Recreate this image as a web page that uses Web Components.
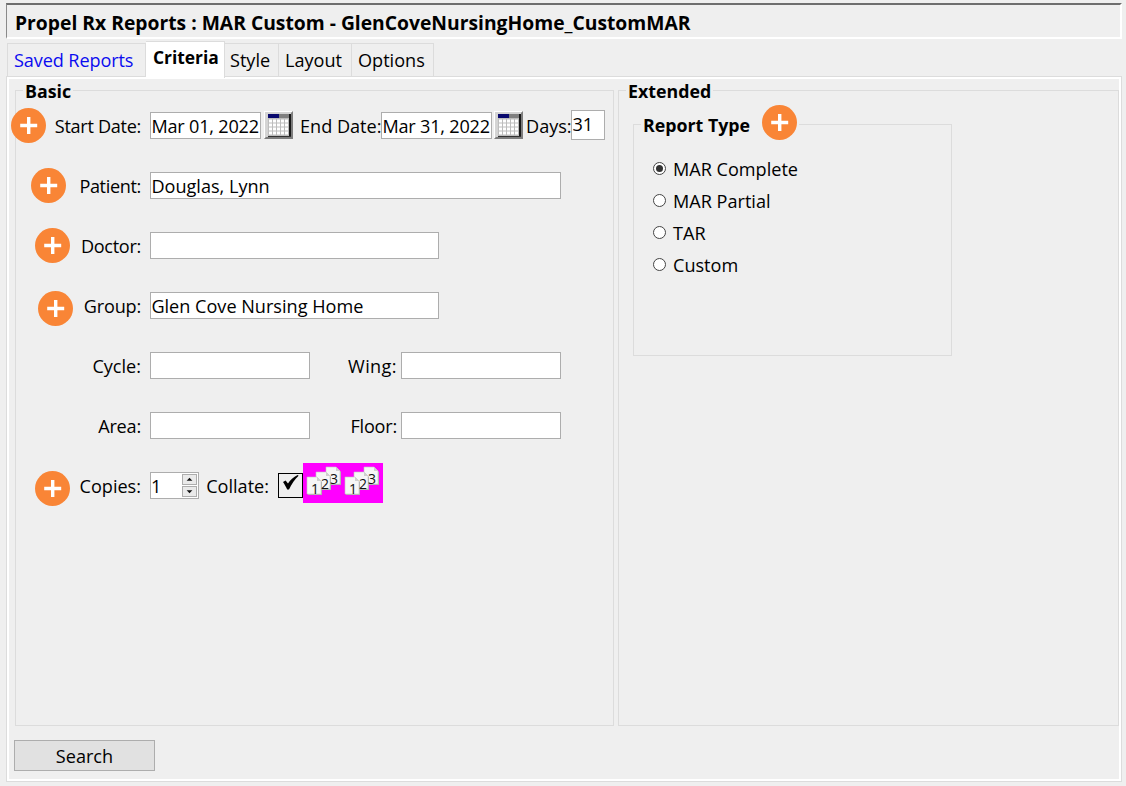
<!DOCTYPE html>
<html>
<head>
<meta charset="utf-8">
<title>Propel Rx Reports</title>
<style>
    html, body { margin: 0; height: 100%; }
    body {
        width: 1126px;
        height: 786px;
        overflow: hidden;
        background: #efefef;
        color: #000;
        font: 18.1px "Open Sans", "Noto Sans", sans-serif;
    }
</style>
</head>
<body>
<rx-report-window>
    <rx-title-bar slot="title">Propel Rx Reports : MAR Custom - GlenCoveNursingHome_CustomMAR</rx-title-bar>
    <rx-tab slot="tabs" link style="--w:139px;--pad:6px">Saved Reports</rx-tab>
    <rx-tab slot="tabs" selected style="--w:79px;--pad:7px">Criteria</rx-tab>
    <rx-tab slot="tabs" style="--w:54px;--pad:5px">Style</rx-tab>
    <rx-tab slot="tabs" style="--w:73px;--pad:6px">Layout</rx-tab>
    <rx-tab slot="tabs" style="--w:82px;--pad:6px">Options</rx-tab>

    <rx-group slot="basic" legend="Basic">
        <rx-form-row label="Start Date:" add style="--add-gap:9px;--ls:-.3px">
            <rx-text-box style="--w:111px;letter-spacing:-.2px">Mar 01, 2022</rx-text-box>
            <rx-calendar-button style="margin-left:3px"></rx-calendar-button>
            <rx-label style="margin-left:7px;width:81px">End Date:</rx-label>
            <rx-text-box style="--w:111px;letter-spacing:-.2px">Mar 31, 2022</rx-text-box>
            <rx-calendar-button style="margin-left:2px"></rx-calendar-button>
            <rx-label style="margin-left:3px;width:45px">Days:</rx-label>
            <rx-text-box style="--w:34px;--h:30px">31</rx-text-box>
        </rx-form-row>
        <rx-form-row label="Patient:" add style="--add-gap:13px;--ls:-.35px">
            <rx-text-box style="--w:411px">Douglas, Lynn</rx-text-box>
        </rx-form-row>
        <rx-form-row label="Doctor:" add style="--add-gap:11px;--ls:-.3px">
            <rx-text-box style="--w:289px"></rx-text-box>
        </rx-form-row>
        <rx-form-row label="Group:" add style="--add-gap:11px;--ls:-.2px;--add-drop:6px">
            <rx-text-box style="--w:289px">Glen Cove Nursing Home</rx-text-box>
        </rx-form-row>
        <rx-form-row label="Cycle:">
            <rx-text-box style="--w:160px"></rx-text-box>
            <rx-label style="width:87px;margin-right:4px;letter-spacing:.4px">Wing:</rx-label>
            <rx-text-box style="--w:160px"></rx-text-box>
        </rx-form-row>
        <rx-form-row label="Area:" style="--ls:-.2px">
            <rx-text-box style="--w:160px"></rx-text-box>
            <rx-label style="width:87px;margin-right:4px;letter-spacing:-.2px">Floor:</rx-label>
            <rx-text-box style="--w:160px"></rx-text-box>
        </rx-form-row>
        <rx-form-row label="Copies:" add style="--add-gap:10px;--add-drop:6px">
            <rx-spin-box value="1"></rx-spin-box>
            <rx-label style="width:70px">Collate:</rx-label>
            <rx-check-box style="margin-left:9px"></rx-check-box>
            <rx-collate-icon style="margin-top:-4px"></rx-collate-icon>
        </rx-form-row>
    </rx-group>

    <rx-group slot="extended" legend="Extended">
        <rx-group class="nested" legend="Report Type" add style="--w:319px;--h:249px;--gap:12px;--add-lift:-2px;margin:6px 0 0 14px">
            <rx-radio-list>
                <rx-radio checked>MAR Complete</rx-radio>
                <rx-radio>MAR Partial</rx-radio>
                <rx-radio>TAR</rx-radio>
                <rx-radio>Custom</rx-radio>
            </rx-radio-list>
        </rx-group>
    </rx-group>

    <rx-push-button slot="actions">Search</rx-push-button>
</rx-report-window>

<script>
class RxReportWindow extends HTMLElement {
    connectedCallback() {
        this.attachShadow({ mode: 'open' });
        this.shadowRoot.innerHTML = `
            <style>
                :host { display: flex; flex-direction: column; height: 786px; box-sizing: border-box; padding: 3px 4px 4px 6px; }
                .tabs { display: flex; margin: 4px 0 0 1px; height: 33px; position: relative; z-index: 1; }
                .panel {
                    flex: 1;
                    box-sizing: border-box;
                    border: 1px solid #dcdcdc;
                    box-shadow: inset 0 0 0 2px #fff;
                    padding: 3px 3px 10px 8px;
                    display: flex;
                    flex-direction: column;
                }
                .groups { flex: 1; display: grid; grid-template-columns: 599px 501px; column-gap: 4px; }
                .actions { margin: 14px 0 0 -1px; }
            </style>
            <slot name="title"></slot>
            <div class="tabs"><slot name="tabs"></slot></div>
            <div class="panel">
                <div class="groups">
                    <slot name="basic"></slot>
                    <slot name="extended"></slot>
                </div>
                <div class="actions"><slot name="actions"></slot></div>
            </div>
        `;
    }
}

class RxTitleBar extends HTMLElement {
    connectedCallback() {
        this.attachShadow({ mode: 'open' });
        this.shadowRoot.innerHTML = `
            <style>
                :host {
                    display: block;
                    box-sizing: border-box;
                    height: 36px;
                    line-height: 36px;
                    padding-left: 8px;
                    border-top: 2px solid #6e6e6e;
                    border-left: 1px solid #8a8a8a;
                    border-right: 2px solid #fff;
                    border-bottom: 2px solid #fff;
                    font-size: 19.3px;
                    font-weight: 700;
                    white-space: nowrap;
                }
            </style>
            <slot></slot>
        `;
    }
}

class RxTab extends HTMLElement {
    connectedCallback() {
        this.attachShadow({ mode: 'open' });
        this.shadowRoot.innerHTML = `
            <style>
                :host {
                    display: block;
                    box-sizing: border-box;
                    width: var(--w);
                    height: 33px;
                    padding-left: var(--pad);
                    line-height: 33px;
                    border: 1px solid #dcdcdc;
                    border-bottom: 0;
                    border-left: 0;
                    white-space: nowrap;
                }
                :host([link]) { color: #0b0bf0; border-left: 1px solid #dcdcdc; letter-spacing: -.1px; }
                :host([selected]) {
                    position: relative;
                    height: 37px;
                    margin-top: -2px;
                    background: #fff;
                    font-size: 17.4px;
                    font-weight: 700;
                    line-height: 31px;
                }
            </style>
            <slot></slot>
        `;
    }
}

class RxGroup extends HTMLElement {
    connectedCallback() {
        this.attachShadow({ mode: 'open' });
        const add = this.hasAttribute('add') ? '<rx-add-button></rx-add-button>' : '';
        this.shadowRoot.innerHTML = `
            <style>
                :host { display: block; width: var(--w, auto); height: var(--h, auto); min-width: 0; }
                fieldset {
                    box-sizing: border-box;
                    height: 100%;
                    margin: 0;
                    padding: 0;
                    min-width: 0;
                    border: 1px solid #dcdcdc;
                }
                legend {
                    display: flex;
                    align-items: center;
                    gap: var(--gap, 0);
                    margin-left: 7px;
                    padding: 0 2px;
                    line-height: 21px;
                    font-size: 17.8px;
                    font-weight: 700;
                }
                legend span { transform: translateY(1px); }
                legend rx-add-button { transform: translateY(var(--add-lift, 0)); }
            </style>
            <fieldset>
                <legend><span>${this.getAttribute('legend')}</span>${add}</legend>
                <slot></slot>
            </fieldset>
        `;
    }
}

class RxFormRow extends HTMLElement {
    connectedCallback() {
        this.attachShadow({ mode: 'open' });
        const add = this.hasAttribute('add') ? '<rx-add-button></rx-add-button>' : '';
        this.shadowRoot.innerHTML = `
            <style>
                :host { display: flex; align-items: center; height: 48px; margin-bottom: 12px; }
                .lead {
                    flex: none;
                    width: 125px;
                    margin-right: 9px;
                    display: flex;
                    justify-content: flex-end;
                    align-items: center;
                    gap: var(--add-gap, 0);
                    white-space: nowrap;
                }
                .lead span { padding-top: 2px; letter-spacing: var(--ls, 0); }
                .lead rx-add-button { margin-top: var(--add-drop, 0); }
                .controls { display: flex; align-items: center; }
            </style>
            <div class="lead">${add}<span>${this.getAttribute('label')}</span></div>
            <div class="controls"><slot></slot></div>
        `;
    }
}

class RxLabel extends HTMLElement {
    connectedCallback() {
        this.attachShadow({ mode: 'open' });
        this.shadowRoot.innerHTML = `
            <style>
                :host { display: block; flex: none; padding-top: 2px; text-align: right; white-space: nowrap; }
            </style>
            <slot></slot>
        `;
    }
}

class RxTextBox extends HTMLElement {
    connectedCallback() {
        this.attachShadow({ mode: 'open' });
        this.shadowRoot.innerHTML = `
            <style>
                :host {
                    display: block;
                    flex: none;
                    box-sizing: border-box;
                    width: var(--w);
                    height: var(--h, 27px);
                    line-height: 27px;
                    padding-left: .4px;
                    background: #fff;
                    border: 1px solid #adadad;
                    white-space: nowrap;
                    overflow: hidden;
                }
            </style>
            <slot></slot>
        `;
    }
}

class RxCalendarButton extends HTMLElement {
    connectedCallback() {
        this.attachShadow({ mode: 'open' });
        let cells = '';
        for (let r = 0; r < 4; r++) {
            for (let c = 0; c < 5; c++) {
                cells += `<rect x="${5 + c * 4}" y="${8.5 + r * 4}" width="3" height="3" fill="#fff"/>`;
            }
        }
        this.shadowRoot.innerHTML = `
            <style>
                :host { display: block; flex: none; width: 29px; height: 28px; }
                svg { display: block; }
            </style>
            <svg width="29" height="28" viewBox="0 0 29 28">
                <rect width="29" height="28" fill="#d4d4d4"/>
                <path d="M0 28V0H29L28 1H1V27Z" fill="#fff"/>
                <path d="M29 0V28H0L2 26H27V2Z" fill="#7d7d7d"/>
                <rect x="4" y="3" width="21" height="22" fill="#bdbdbd"/>
                <rect x="4" y="3" width="11" height="4" fill="#0a0a6e"/>
                <rect x="15" y="3" width="10" height="4" fill="#808080"/>
                <rect x="25" y="3" width="2" height="23" fill="#1a1a1a"/>
                <rect x="4" y="25" width="23" height="1" fill="#333"/>
                ${cells}
            </svg>
        `;
    }
}

class RxAddButton extends HTMLElement {
    connectedCallback() {
        this.attachShadow({ mode: 'open' });
        this.shadowRoot.innerHTML = `
            <style>
                :host { display: block; flex: none; width: 35px; height: 35px; }
                svg { display: block; }
            </style>
            <svg width="35" height="35" viewBox="0 0 35 35">
                <circle cx="17.5" cy="17.5" r="17.5" fill="#f98536"/>
                <path d="M16 9h3.4v6.8h6.8v3.4h-6.8V26H16v-6.8H9.2v-3.4H16Z" fill="#fff"/>
            </svg>
        `;
    }
}

class RxSpinBox extends HTMLElement {
    connectedCallback() {
        this.attachShadow({ mode: 'open' });
        this.shadowRoot.innerHTML = `
            <style>
                :host {
                    display: flex;
                    flex: none;
                    box-sizing: border-box;
                    width: 49px;
                    height: 27px;
                    line-height: 27px;
                    background: #fff;
                    border: 1px solid #adadad;
                }
                .value { flex: 1; }
                .arrows { display: flex; flex-direction: column; gap: 1px; width: 15px; margin: 0 1px; padding-top: 1px; }
                .arrows svg { display: block; background: #eaeaea; border: 1px solid #adadad; box-sizing: border-box; }
            </style>
            <span class="value">${this.getAttribute('value')}</span>
            <div class="arrows">
                <svg width="15" height="11" viewBox="0 0 15 11"><path d="M4 7l3.5-3.5L11 7Z" fill="#111"/></svg>
                <svg width="15" height="11" viewBox="0 0 15 11"><path d="M4 4l3.5 3.5L11 4Z" fill="#111"/></svg>
            </div>
        `;
    }
}

class RxCheckBox extends HTMLElement {
    connectedCallback() {
        this.attachShadow({ mode: 'open' });
        this.shadowRoot.innerHTML = `
            <style>
                :host { display: block; flex: none; box-sizing: border-box; width: 25px; height: 25px; border: 1px solid #000; }
                svg { display: block; }
            </style>
            <svg width="23" height="23" viewBox="0 0 23 23">
                <path d="M4 8l2.6-1.6 2.4 3.2C11 6 14.5 3 18.6 1l1 .8C16 5 12.6 10 10 15.5H8.2C7 13 5.6 10.2 4 8Z" fill="#000"/>
            </svg>
        `;
    }
}

class RxCollateIcon extends HTMLElement {
    connectedCallback() {
        this.attachShadow({ mode: 'open' });
        const page = (x, y) => `
            <path d="M${x + 1} ${y + 1}h10l4 4v13h-14Z" fill="#b0b0b0"/>
            <path d="M${x} ${y}h10l4 4v13h-14Z" fill="#f6f6f6" stroke="#c4c4c4" stroke-width=".6"/>
            <path d="M${x + 10} ${y}v4h4Z" fill="#cfcfcf"/>`;
        const digit = (x, y, n) => `<text x="${x}" y="${y}" text-anchor="middle" font-size="14" font-family="Open Sans, sans-serif" fill="#111">${n}</text>`;
        // digits go on last so the front page never cuts them
        const stack = (o) => page(o + 23, 4) + page(o + 13, 9) + page(o + 4, 14)
            + digit(o + 31, 21, 3) + digit(o + 22, 25.5, 2) + digit(o + 12, 30.5, 1);
        this.shadowRoot.innerHTML = `
            <style>
                :host { display: block; flex: none; width: 80px; height: 40px; background: #f0f; }
                svg { display: block; }
            </style>
            <svg width="80" height="40" viewBox="0 0 80 40">${stack(0)}${stack(38)}</svg>
        `;
    }
}

class RxRadioList extends HTMLElement {
    connectedCallback() {
        this.attachShadow({ mode: 'open' });
        this.shadowRoot.innerHTML = `
            <style>
                :host { display: block; padding: 10px 0 0 19px; }
            </style>
            <slot></slot>
        `;
    }
}

class RxRadio extends HTMLElement {
    connectedCallback() {
        this.attachShadow({ mode: 'open' });
        const dot = this.hasAttribute('checked') ? '<circle cx="6.5" cy="6.5" r="3.5" fill="#333"/>' : '';
        this.shadowRoot.innerHTML = `
            <style>
                :host { display: flex; align-items: center; gap: 7px; height: 32px; white-space: nowrap; }
                svg { display: block; flex: none; }
                span { padding-top: 2px; }
            </style>
            <svg width="13" height="13" viewBox="0 0 13 13">
                <circle cx="6.5" cy="6.5" r="6" fill="#fff" stroke="#444"/>${dot}
            </svg>
            <span><slot></slot></span>
        `;
    }
}

class RxPushButton extends HTMLElement {
    connectedCallback() {
        this.attachShadow({ mode: 'open' });
        this.shadowRoot.innerHTML = `
            <style>
                :host {
                    display: block;
                    box-sizing: border-box;
                    width: 141px;
                    height: 31px;
                    line-height: 31px;
                    text-align: center;
                    background: #e1e1e1;
                    border: 1px solid #adadad;
                }
            </style>
            <slot></slot>
        `;
    }
}

customElements.define('rx-report-window', RxReportWindow);
customElements.define('rx-title-bar', RxTitleBar);
customElements.define('rx-tab', RxTab);
customElements.define('rx-group', RxGroup);
customElements.define('rx-form-row', RxFormRow);
customElements.define('rx-label', RxLabel);
customElements.define('rx-text-box', RxTextBox);
customElements.define('rx-calendar-button', RxCalendarButton);
customElements.define('rx-add-button', RxAddButton);
customElements.define('rx-spin-box', RxSpinBox);
customElements.define('rx-check-box', RxCheckBox);
customElements.define('rx-collate-icon', RxCollateIcon);
customElements.define('rx-radio-list', RxRadioList);
customElements.define('rx-radio', RxRadio);
customElements.define('rx-push-button', RxPushButton);
</script>
</body>
</html>
